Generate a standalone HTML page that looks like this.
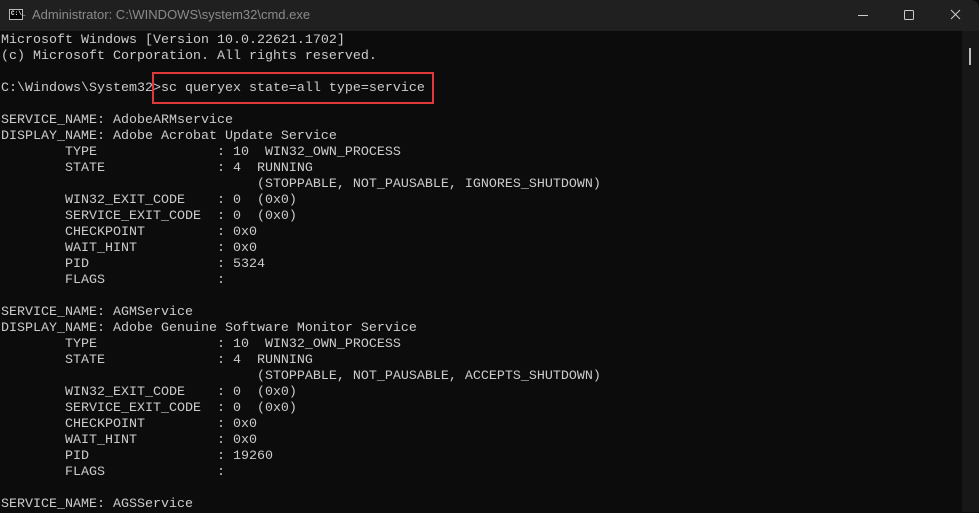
<!DOCTYPE html>
<html><head><meta charset="utf-8"><style>
html,body{margin:0;padding:0;width:979px;height:512px;overflow:hidden;background:#0c0c0c}
.tb{position:absolute;left:0;top:0;width:979px;height:31px;background:#202020;border-top-right-radius:8px}
.tt{position:absolute;left:32px;top:7px;font:13px "Liberation Sans",sans-serif;color:#8a8a8a}
.ic{position:absolute;left:9px;top:9px;width:14px;height:11px;border:1px solid #bbb;background:#000;box-sizing:border-box}
.ic span{position:absolute;left:1px;top:1px;font:bold 6px "Liberation Mono",monospace;color:#fff;line-height:6px}
pre{position:absolute;left:1px;top:33px;margin:0;font:13.33px/16px "Liberation Mono",monospace;color:#cccccc;letter-spacing:0}
.sb{position:absolute;left:962px;top:31px;width:17px;height:481px;background:#171717}
.th{position:absolute;width:2px;height:17px;background:#bbb}
.box{position:absolute;left:152px;top:72px;width:282px;height:32px;border:2px solid #e0383b;box-sizing:border-box}
.btn{position:absolute;top:0;height:31px}
</style></head><body>
<div class="tb">
<div class="ic"><span>C:\_</span></div>
<div class="tt">Administrator: C:\WINDOWS\system32\cmd.exe</div>
<svg class="btn" style="left:840px" width="140" height="31"><line x1="18" y1="15.5" x2="28" y2="15.5" stroke="#ccc" stroke-width="1"/><rect x="64.5" y="10.5" width="9" height="9" fill="none" stroke="#ccc" rx="1"/><path d="M111 10 L120 19 M120 10 L111 19" stroke="#ccc" stroke-width="1"/></svg>
</div>
<pre>Microsoft Windows [Version 10.0.22621.1702]
(c) Microsoft Corporation. All rights reserved.

C:\Windows\System32&gt;sc queryex state=all type=service

SERVICE_NAME: AdobeARMservice
DISPLAY_NAME: Adobe Acrobat Update Service
        TYPE               : 10  WIN32_OWN_PROCESS
        STATE              : 4  RUNNING
                                (STOPPABLE, NOT_PAUSABLE, IGNORES_SHUTDOWN)
        WIN32_EXIT_CODE    : 0  (0x0)
        SERVICE_EXIT_CODE  : 0  (0x0)
        CHECKPOINT         : 0x0
        WAIT_HINT          : 0x0
        PID                : 5324
        FLAGS              :

SERVICE_NAME: AGMService
DISPLAY_NAME: Adobe Genuine Software Monitor Service
        TYPE               : 10  WIN32_OWN_PROCESS
        STATE              : 4  RUNNING
                                (STOPPABLE, NOT_PAUSABLE, ACCEPTS_SHUTDOWN)
        WIN32_EXIT_CODE    : 0  (0x0)
        SERVICE_EXIT_CODE  : 0  (0x0)
        CHECKPOINT         : 0x0
        WAIT_HINT          : 0x0
        PID                : 19260
        FLAGS              :

SERVICE_NAME: AGSService</pre>
<div class="box"></div>
<div class="sb"><div class="th" style="left:7px;top:17px"></div></div>
</body></html>
